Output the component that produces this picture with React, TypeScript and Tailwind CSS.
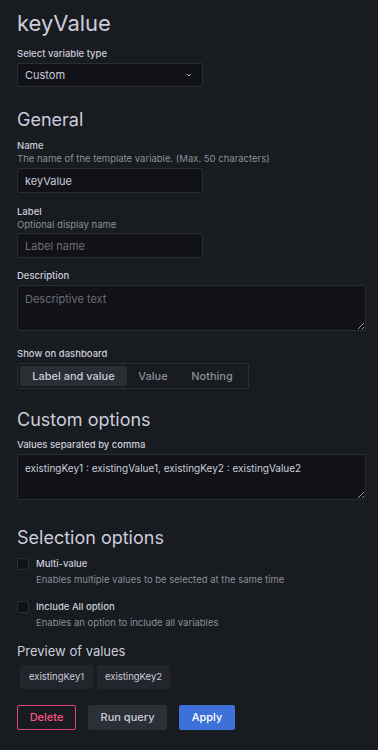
import { useState } from "react";

function FieldLabel({ text, desc, className = "" }: { text: string; desc?: string; className?: string }) {
  return (
    <div className={className}>
      <div className="text-[9.5px] leading-[13px] font-medium text-[#ccccdc]">{text}</div>
      {desc && <div className="text-[9.5px] leading-[13px] text-[#8d8e9a]">{desc}</div>}
    </div>
  );
}

function CheckRow({ label, desc, className = "" }: { label: string; desc: string; className?: string }) {
  const [checked, setChecked] = useState(false);
  return (
    <div className={`flex gap-[7px] ${className}`}>
      <button
        onClick={() => setChecked(!checked)}
        className={`mt-[1px] h-[12px] w-[12px] shrink-0 rounded-[2px] border border-[#2c2f35] ${
          checked ? "bg-[#3d71d9]" : "bg-[#111217]"
        }`}
      />
      <div>
        <div className="text-[9.5px] leading-[13px] font-medium text-[#ccccdc]">{label}</div>
        <div className="mt-[3px] text-[9.5px] leading-[13px] text-[#8d8e9a]">{desc}</div>
      </div>
    </div>
  );
}

const displayOptions = [
  { label: "Label and value", w: "w-[107px]" },
  { label: "Value", w: "w-[52px]" },
  { label: "Nothing", w: "w-[66px]" },
];

export default function App() {
  const [display, setDisplay] = useState("Label and value");
  const [name, setName] = useState("keyValue");
  const [values, setValues] = useState("existingKey1 : existingValue1, existingKey2 : existingValue2");

  const inputCls =
    "block w-[186px] h-[25px] rounded-[2px] border border-[#2a2d33] bg-[#111217] px-[7px] text-[11px] text-[#ccccdc] placeholder:text-[#6c6d77] outline-none";
  const areaCls =
    "block w-[349px] h-[46px] rounded-[2px] border border-[#2a2d33] bg-[#111217] px-[7px] pt-[6px] text-[#ccccdc] placeholder:text-[#6c6d77] outline-none resize-y";

  return (
    <main className="min-h-[750px] bg-[#181b1f] px-[17px] pt-[10px] font-['Inter','Noto_Sans',sans-serif] text-[#ccccdc]">
      <h1 className="text-[22px] leading-[27px] font-normal">keyValue</h1>

      <FieldLabel text="Select variable type" className="mt-[10px]" />
      <div className="mt-[3px] flex h-[24px] w-[186px] items-center justify-between rounded-[2px] border border-[#2a2d33] bg-[#111217] px-[7px] text-[11px]">
        <span>Custom</span>
        <svg width="8" height="8" viewBox="0 0 24 24" fill="none" stroke="#ccccdc" strokeWidth="2.5" className="mr-[2px]">
          <path d="M6 9l6 6 6-6" />
        </svg>
      </div>

      <h2 className="mt-[22px] text-[18px] leading-[22px] font-normal">General</h2>

      <FieldLabel
        text="Name"
        desc="The name of the template variable. (Max. 50 characters)"
        className="mt-[8px]"
      />
      <input className={`mt-[3px] ${inputCls}`} value={name} onChange={(e) => setName(e.target.value)} />

      <FieldLabel text="Label" desc="Optional display name" className="mt-[12px]" />
      <input className={`mt-[2px] ${inputCls}`} placeholder="Label name" />

      <FieldLabel text="Description" className="mt-[11px]" />
      <textarea className={`mt-[3px] text-[11px] leading-[15px] ${areaCls}`} placeholder="Descriptive text" />

      <FieldLabel text="Show on dashboard" className="mt-[16px]" />
      <div className="mt-[3px] flex h-[26px] w-[232px] items-center rounded-[2px] border border-[#2a2d33] px-[2px]">
        {displayOptions.map((opt) => (
          <button
            key={opt.label}
            onClick={() => setDisplay(opt.label)}
            className={`h-[20px] ${opt.w} whitespace-nowrap rounded-[2px] text-[11px] font-medium ${
              display === opt.label ? "bg-[#2a2d33] text-[#ccccdc]" : "text-[#8d8e9a]"
            }`}
          >
            {opt.label}
          </button>
        ))}
      </div>

      <h2 className="mt-[20px] text-[18px] leading-[22px] font-normal">Custom options</h2>

      <FieldLabel text="Values separated by comma" className="mt-[7px]" />
      <textarea
        className={`mt-[3px] text-[10px] leading-[15px] ${areaCls}`}
        value={values}
        onChange={(e) => setValues(e.target.value)}
      />

      <h2 className="mt-[27px] text-[18px] leading-[22px] font-normal">Selection options</h2>

      <CheckRow
        label="Multi-value"
        desc="Enables multiple values to be selected at the same time"
        className="mt-[8px]"
      />
      <CheckRow label="Include All option" desc="Enables an option to include all variables" className="mt-[14px]" />

      <div className="mt-[14px] text-[13px] leading-[16px]">Preview of values</div>
      <div className="mt-[6px] flex gap-[4px] pl-[3px]">
        {["existingKey1", "existingKey2"].map((v) => (
          <div
            key={v}
            className="flex h-[24px] w-[73px] items-center justify-center rounded-[2px] bg-[#22252b] text-[9.5px]"
          >
            {v}
          </div>
        ))}
      </div>

      <div className="mt-[16px] flex gap-[12px]">
        <button className="h-[25px] w-[59px] rounded-[2px] border border-[#d9467a] text-[11px] font-medium text-[#ff5286]">
          Delete
        </button>
        <button className="h-[25px] w-[79px] rounded-[2px] bg-[#2c2f35] text-[11px] font-medium text-[#ccccdc]">
          Run query
        </button>
        <button className="h-[25px] w-[56px] rounded-[2px] bg-[#3d71d9] text-[11px] font-medium text-white">
          Apply
        </button>
      </div>
    </main>
  );
}
